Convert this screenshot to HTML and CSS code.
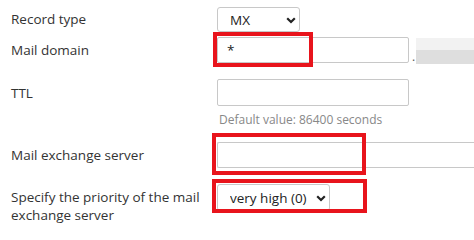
FILE: index.html
```html
<!DOCTYPE html>
<html>
<head>
<meta charset="utf-8">
<link rel="stylesheet" href="styles.css">
</head>
<body>
<form class="form">
  <div class="row row-type">
    <label class="label">Record type</label>
    <div class="field">
      <div class="select-wrap sel-mx">
        <select class="select"><option>MX</option></select>
        <svg class="chev" width="10" height="7" viewBox="0 0 10 7"><path d="M1.2 1.2 L5 5 L8.8 1.2" fill="none" stroke="#222" stroke-width="2.2"/></svg>
      </div>
    </div>
  </div>
  <div class="row row-domain">
    <label class="label">Mail domain</label>
    <div class="field domain-field">
      <div class="mark-wrap">
        <input class="input input-domain" type="text" value="*">
        <span class="mark mark-domain"></span>
      </div>
      <span class="dot">.</span>
      <span class="blur"><span class="blur-top"></span><span class="blur-bottom"></span></span>
    </div>
  </div>
  <div class="row row-ttl">
    <label class="label">TTL</label>
    <div class="field">
      <input class="input input-ttl" type="text">
      <div class="hint">Default value: 86400 seconds</div>
    </div>
  </div>
  <div class="row row-mx">
    <label class="label">Mail exchange server</label>
    <div class="field">
      <div class="mark-wrap">
        <input class="input input-mx" type="text">
        <span class="mark mark-mx"></span>
      </div>
    </div>
  </div>
  <div class="row row-prio">
    <label class="label label-two">Specify the priority of the mail exchange server</label>
    <div class="field">
      <div class="mark-wrap">
        <div class="select-wrap sel-prio">
          <select class="select"><option>very high (0)</option></select>
          <svg class="chev" width="10" height="7" viewBox="0 0 10 7"><path d="M1.2 1.2 L5 5 L8.8 1.2" fill="none" stroke="#222" stroke-width="2.2"/></svg>
        </div>
        <span class="mark mark-prio"></span>
      </div>
    </div>
  </div>
</form>
</body>
</html>
```
FILE: styles.css
```css
html, body {
  margin: 0;
  padding: 0;
  background: #fff;
  overflow: hidden;
}
body {
  font-family: "Open Sans", "Noto Sans", sans-serif;
  color: #333;
  font-size: 13.5px;
  width: 474px;
  height: 224px;
}
.form {
  display: flex;
  flex-direction: column;
  padding-top: 7px;
}
.row {
  display: grid;
  grid-template-columns: 217px 1fr;
  align-items: start;
}
.label {
  padding-left: 11px;
  line-height: 18px;
}
.field {
  position: relative;
  display: flex;
  flex-direction: column;
  align-items: flex-start;
}
.select-wrap {
  position: relative;
  display: inline-block;
}
.select {
  appearance: none;
  -webkit-appearance: none;
  font-family: "Open Sans", "Noto Sans", sans-serif;
  font-size: 13.5px;
  color: #222;
  background: #fff;
  border: 1px solid #c8c8c8;
  border-radius: 3px;
  padding: 0 0 0 12px;
  margin: 0;
  display: block;
  box-sizing: border-box;
}
.chev {
  position: absolute;
  top: 50%;
  margin-top: -3px;
  pointer-events: none;
}
.sel-mx .select { width: 83px; height: 25px; }
.sel-mx .chev { right: 4px; }
.sel-prio .select { width: 113px; height: 27px; }
.sel-prio .chev { right: 4px; }
.input {
  font-family: "Open Sans", "Noto Sans", sans-serif;
  font-size: 13.5px;
  color: #222;
  border: 1px solid #c8c8c8;
  border-radius: 2px;
  background: #fff;
  box-sizing: border-box;
  margin: 0;
  padding: 0 9px;
  display: block;
}
.row-type .label { padding-top: 3px; }
.row-type { height: 30px; }
.row-domain { height: 42px; }
.row-domain .label { padding-top: 4px; }
.domain-field {
  flex-direction: row;
  align-items: flex-start;
}
.input-domain { width: 192px; height: 26px; }
.dot {
  line-height: 14px;
  margin-top: 13px;
  margin-left: 3px;
  color: #555;
  font-size: 12px;
}
.blur {
  display: flex;
  flex-direction: column;
  width: 58px;
  height: 26px;
  margin-top: 1px;
  margin-left: 1px;
}
.blur-top { height: 12px; background: #f2f2f2; }
.blur-bottom { height: 14px; background: #dedede; }
.row-ttl { height: 63px; }
.row-ttl .label { padding-top: 5px; }
.input-ttl { width: 192px; height: 27px; }
.hint {
  font-size: 12px;
  color: #888;
  margin-top: 6px;
  margin-left: 2px;
  line-height: 16px;
}
.row-mx { height: 42px; }
.row-mx .label { padding-top: 4px; }
.input-mx {
  width: 257px;
  height: 26px;
  border-right: 0;
  border-radius: 2px 0 0 2px;
}
.row-prio .label { padding-top: 4px; }
.mark-wrap {
  position: relative;
  display: inline-block;
}
.mark {
  position: absolute;
  border: 4px solid #e8141c;
  box-sizing: border-box;
  pointer-events: none;
}
.mark-domain { left: -4px; top: -5px; width: 100px; height: 35px; }
.mark-mx { left: -5px; top: -9px; width: 154px; height: 42px; }
.mark-prio { left: -5px; top: -5px; width: 155px; height: 34px; }
```
